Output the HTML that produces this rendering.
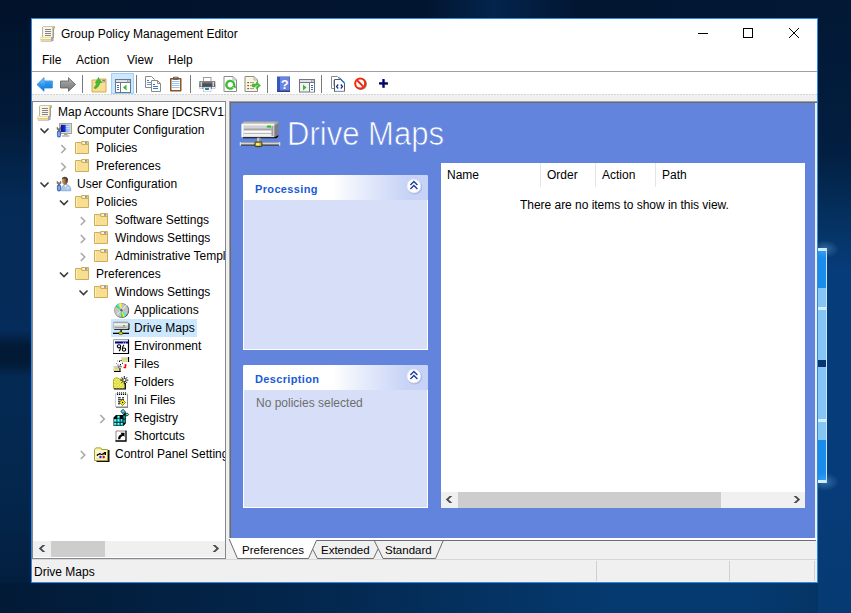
<!DOCTYPE html>
<html><head><meta charset="utf-8">
<style>
*{margin:0;padding:0;box-sizing:border-box}
html,body{width:851px;height:613px;overflow:hidden;background:#02132a;font-family:"Liberation Sans", sans-serif;font-size:12px;color:#000}
.a{position:absolute}
.t{position:absolute;white-space:nowrap}
svg{position:absolute;left:0;top:0}
</style></head><body>
<div class="a" style="left:0;top:0;width:851px;height:613px;background:#021a36"></div><div class="a" style="left:0;top:0;width:851px;height:19px;background:linear-gradient(90deg,#01122a 0%,#021530 50%,#03244c 58%,#021632 68%,#021834 100%)"></div><div class="a" style="left:0;top:0;width:31px;height:613px;background:linear-gradient(180deg,#01122a 0px,#021a38 120px,#042a56 200px,#052c5a 330px,#021a36 346px,#021a36 362px,#042a54 378px,#04264c 500px,#021c3a 613px)"></div><div class="a" style="left:0;top:583px;width:851px;height:30px;background:linear-gradient(90deg,#021a36 0%,#03264c 35%,#053a70 72%,#053a70 88%,#04325f 100%)"></div><div class="a" style="left:818px;top:0;width:33px;height:613px;background:linear-gradient(180deg,#021834 0px,#021e40 150px,#04305e 215px,#073c7a 270px,#073c7a 480px,#063a72 613px)"></div><div class="a" style="left:818px;top:248px;width:9px;height:3px;background:#e8f6ff;"></div><div class="a" style="left:818px;top:251px;width:9px;height:37px;background:#1a8cec;"></div><div class="a" style="left:818px;top:288px;width:9px;height:72px;background:#86c6f4;"></div><div class="a" style="left:818px;top:307px;width:9px;height:3px;background:#e8f6ff;opacity:.8"></div><div class="a" style="left:818px;top:360px;width:9px;height:7px;background:#083472;"></div><div class="a" style="left:818px;top:367px;width:9px;height:73px;background:#86c6f4;"></div><div class="a" style="left:818px;top:419px;width:9px;height:3px;background:#e8f6ff;opacity:.8"></div><div class="a" style="left:818px;top:440px;width:9px;height:41px;background:#1a8cec;"></div><div class="a" style="left:818px;top:480px;width:9px;height:3px;background:#e8f6ff;"></div><div class="a" style="left:826px;top:248px;width:1px;height:235px;background:#c8e8ff;"></div><div class="a" style="left:812px;top:236px;width:30px;height:26px;background:radial-gradient(ellipse 14px 9px at 13px 13px,rgba(140,210,255,.32),rgba(140,210,255,0))"></div><div class="a" style="left:812px;top:469px;width:30px;height:26px;background:radial-gradient(ellipse 14px 9px at 13px 13px,rgba(140,210,255,.32),rgba(140,210,255,0))"></div><div class="a" style="left:31px;top:18px;width:787px;height:565px;border:1px solid #2b8ae6;background:#fff"></div><div class="t" style="left:61px;top:25px;font-size:12px;color:#000;font-weight:400;line-height:18px;">Group Policy Management Editor</div><div class="t" style="left:42px;top:51px;font-size:12px;color:#000;font-weight:400;line-height:18px;">File</div><div class="t" style="left:76px;top:51px;font-size:12px;color:#000;font-weight:400;line-height:18px;">Action</div><div class="t" style="left:127px;top:51px;font-size:12px;color:#000;font-weight:400;line-height:18px;">View</div><div class="t" style="left:168px;top:51px;font-size:12px;color:#000;font-weight:400;line-height:18px;">Help</div><div class="a" style="left:32px;top:71px;width:785px;height:1px;background:#a0a0a0;"></div><div class="a" style="left:111px;top:73px;width:23px;height:21px;background:#cce8ff;border:1px solid #99d1ff"></div><svg width="851" height="613" viewBox="0 0 851 613" shape-rendering="crispEdges"><g transform="translate(39,25)" shape-rendering="geometricPrecision"><path d="M3 2L4 1H14V13H3Z" fill="#fdf5d4"/><rect x="3" y="2" width="1" height="11" fill="#b4b4b4"/><rect x="4" y="1" width="10" height="1" fill="#c4c4c4"/><rect x="13" y="2" width="1" height="11" fill="#cfc8a8"/><rect x="14" y="3" width="1" height="10" fill="#9a9a9a"/><rect x="6" y="4" width="6" height="1" fill="#7f84a2"/><rect x="6" y="6" width="6" height="1" fill="#7f84a2"/><rect x="6" y="8" width="6" height="1" fill="#7f84a2"/><rect x="6" y="10" width="6" height="1" fill="#7f84a2"/><path d="M14 1L16 1.5L16 3.5L14.5 4Z" fill="#cfa84a"/><rect x="1" y="12" width="12" height="4" rx="1.2" fill="#e8e0a8"/><rect x="2" y="13" width="10" height="1.2" fill="#fbf8e0"/><rect x="2" y="14.2" width="10" height="1" fill="#f0c070"/><rect x="12" y="12" width="2.5" height="4" fill="#a4a4b0"/><rect x="2" y="16" width="11" height="1" fill="#a0a0a0" opacity=".55"/></g></svg><div class="a" style="left:82px;top:75px;width:1px;height:18px;background:#7a7a7a;"></div><div class="a" style="left:136px;top:75px;width:1px;height:18px;background:#7a7a7a;"></div><div class="a" style="left:190px;top:75px;width:1px;height:18px;background:#7a7a7a;"></div><div class="a" style="left:267px;top:75px;width:1px;height:18px;background:#7a7a7a;"></div><div class="a" style="left:321px;top:75px;width:1px;height:18px;background:#7a7a7a;"></div><div class="a" style="left:32px;top:95px;width:785px;height:487px;background:#f0f0f0;"></div><div class="a" style="left:32px;top:94px;width:785px;height:1px;background:repeating-linear-gradient(90deg,#d4d4d4 0 2px,#f6f6f6 2px 3px)"></div><div class="a" style="left:32px;top:101px;width:194px;height:458px;border:1px solid #828790;background:#fff"></div><div class="a" style="left:111px;top:319px;width:86px;height:18px;background:#cce8ff;"></div><div class="a" style="left:33px;top:102px;width:192px;height:439px;overflow:hidden"><div class="t" style="left:25px;top:1px;line-height:18px">Map Accounts Share [DCSRV1.IT</div><div class="t" style="left:44px;top:19px;line-height:18px">Computer Configuration</div><div class="t" style="left:63px;top:37px;line-height:18px">Policies</div><div class="t" style="left:63px;top:55px;line-height:18px">Preferences</div><div class="t" style="left:44px;top:73px;line-height:18px">User Configuration</div><div class="t" style="left:63px;top:91px;line-height:18px">Policies</div><div class="t" style="left:82px;top:109px;line-height:18px">Software Settings</div><div class="t" style="left:82px;top:127px;line-height:18px">Windows Settings</div><div class="t" style="left:82px;top:145px;line-height:18px">Administrative Templates</div><div class="t" style="left:63px;top:163px;line-height:18px">Preferences</div><div class="t" style="left:82px;top:181px;line-height:18px">Windows Settings</div><div class="t" style="left:101px;top:199px;line-height:18px">Applications</div><div class="t" style="left:101px;top:217px;line-height:18px">Drive Maps</div><div class="t" style="left:101px;top:235px;line-height:18px">Environment</div><div class="t" style="left:101px;top:253px;line-height:18px">Files</div><div class="t" style="left:101px;top:271px;line-height:18px">Folders</div><div class="t" style="left:101px;top:289px;line-height:18px">Ini Files</div><div class="t" style="left:101px;top:307px;line-height:18px">Registry</div><div class="t" style="left:101px;top:325px;line-height:18px">Shortcuts</div><div class="t" style="left:82px;top:343px;line-height:18px">Control Panel Settings</div></div><svg width="851" height="613" viewBox="0 0 851 613" shape-rendering="crispEdges"><g transform="translate(36,77)" shape-rendering="geometricPrecision"><defs><linearGradient id="abl" x1="0" y1="0" x2="0" y2="1"><stop offset="0" stop-color="#8fd0ff"/><stop offset=".5" stop-color="#2c9cf0"/><stop offset="1" stop-color="#0a70d0"/></linearGradient></defs><path d="M1 7.5L8 0.7V4H16.3V11H8V14.3Z" fill="url(#abl)" stroke="#2a7fd0" stroke-width=".8" stroke-linejoin="round"/><rect x="9" y="5" width="6" height="4.5" fill="#1a88e8" opacity=".6"/></g><g transform="translate(60,77)" shape-rendering="geometricPrecision"><defs><linearGradient id="abr" x1="0" y1="0" x2="0" y2="1"><stop offset="0" stop-color="#b8b8b8"/><stop offset=".5" stop-color="#909090"/><stop offset="1" stop-color="#7a7a7a"/></linearGradient></defs><path d="M15.5 7.5L8.5 0.7V4H0.5V11H8.5V14.3Z" fill="url(#abr)" stroke="#5a5a5a" stroke-width=".8" stroke-linejoin="round"/></g><g transform="translate(91.5,76.5)" shape-rendering="geometricPrecision"><path d="M8.5 2.5H14.5V5.5H8.5Z" fill="#f6dd8e" stroke="#cfae5c"/><rect x="11" y="3.3" width="2.5" height="1.2" fill="#3f7fe0"/><path d="M0.5 3.5H7L8.5 5.5H14.5V15.5H0.5Z" fill="#f7de92" stroke="#cfac58"/><path d="M2.5 11.5C3.5 9.5 5 8.5 5.5 6.5L3.8 6.5L7 1L10 6.2L8.3 6.2C8 9 6 11 4 12.2Z" fill="#3cc030" stroke="#2a9a20" stroke-width=".5"/></g><g transform="translate(115,79)" shape-rendering="geometricPrecision"><rect x="0.5" y="0.5" width="15" height="13" fill="#fff" stroke="#6f7782"/><rect x="1" y="1" width="14" height="2" fill="#dde1e8"/><rect x="12" y="1.5" width="1" height="1" fill="#6f7782"/><rect x="13.6" y="1.5" width="1" height="1" fill="#6f7782"/><rect x="1" y="3" width="14" height="1" fill="#6f7782"/><rect x="5" y="4" width="1" height="9.5" fill="#6f7782"/><rect x="2" y="6" width="2" height="1" fill="#3a6ab8"/><rect x="2" y="8" width="2" height="1" fill="#3a6ab8"/><rect x="2" y="10" width="2" height="1" fill="#3a6ab8"/><path d="M8 8.5L11.5 5.5V11.5Z" fill="#34b830"/></g><g transform="translate(145,76)" shape-rendering="geometricPrecision"><path d="M0.5 0.5H6.5L9.5 3.5V11.5H0.5Z" fill="#fff" stroke="#8a8a8a"/><rect x="2" y="4" width="2" height="1" fill="#3a78c8"/><rect x="2" y="6" width="5" height="1" fill="#6a98d8"/><rect x="2" y="8" width="5" height="1" fill="#6a98d8"/><path d="M6.5 4.5H12.5L15.5 7.5V15.5H6.5Z" fill="#fff" stroke="#8a8a8a"/><path d="M12.5 4.5V7.5H15.5" fill="none" stroke="#8a8a8a"/><rect x="8" y="8" width="2" height="1" fill="#3a78c8"/><rect x="8" y="10" width="5" height="1" fill="#3a78c8"/><rect x="8" y="12" width="5" height="1" fill="#3a78c8"/></g><g transform="translate(169.5,76.5)" shape-rendering="geometricPrecision"><rect x="0.5" y="1.5" width="11.5" height="13.5" rx=".8" fill="#8a5424"/><rect x="2" y="3" width="8.5" height="10.5" fill="#fff"/><rect x="2.5" y="4.5" width="7.5" height="1" fill="#9ec4e4"/><rect x="2.5" y="6.5" width="7.5" height="1" fill="#9ec4e4"/><rect x="2.5" y="8.5" width="7.5" height="1" fill="#9ec4e4"/><rect x="2.5" y="10.5" width="7.5" height="1" fill="#9ec4e4"/><rect x="3.5" y="0.3" width="5.5" height="3" rx=".8" fill="#505050"/><rect x="4.5" y="0.8" width="3.5" height="1" fill="#a0a0a0"/></g><g transform="translate(199,77)" shape-rendering="geometricPrecision"><rect x="4.5" y="0.5" width="7.5" height="4" fill="#fff" stroke="#9a9a9a"/><defs><linearGradient id="prg" x1="0" y1="0" x2="0" y2="1"><stop offset="0" stop-color="#909090"/><stop offset=".5" stop-color="#4a4a4a"/><stop offset="1" stop-color="#6a6a6a"/></linearGradient></defs><rect x="0.3" y="4" width="16" height="7.5" fill="url(#prg)"/><rect x="1.5" y="5" width="1.6" height="4.5" fill="#c8d8e8"/><rect x="13.5" y="5" width="1.6" height="4.5" fill="#c8d8e8"/><rect x="0.3" y="10" width="16" height="1.5" fill="#f0f0f0"/><rect x="3.5" y="10.5" width="1" height="1" fill="#000"/><rect x="12" y="10.5" width="1" height="1" fill="#000"/><rect x="4.5" y="10.5" width="7.5" height="4.3" fill="#fff" stroke="#a8c0d8" stroke-width=".6"/><rect x="6" y="11" width="4" height="2" fill="#2a88e0"/><rect x="7.5" y="11.5" width="1" height="1.5" fill="#208020"/></g><g transform="translate(223.5,76)" shape-rendering="geometricPrecision"><path d="M0.5 0.5H9.5L13 4V15.5H0.5Z" fill="#fff" stroke="#8c8c8c"/><path d="M9.5 0.5V4H13" fill="none" stroke="#b0b0b0"/><path d="M9.4 11.6A3.9 3.9 0 1 1 10.6 9.4" fill="none" stroke="#3cbc30" stroke-width="2.3"/><path d="M8.2 10.6L12.6 12.6L11.6 8.2Z" fill="#3cbc30"/></g><g transform="translate(244.5,76)" shape-rendering="geometricPrecision"><path d="M0.5 0.5H9.5L13 4V15.5H0.5Z" fill="#fdf6dc" stroke="#8c8c8c"/><path d="M9.5 0.5V4H13" fill="none" stroke="#b0b0b0"/><rect x="3" y="6" width="1.2" height="1.2" fill="#222"/><rect x="5.5" y="6.1" width="4" height="1" fill="#9a9a9a"/><rect x="3" y="9" width="1.2" height="1.2" fill="#222"/><rect x="5.5" y="9.1" width="4" height="1" fill="#9a9a9a"/><rect x="3" y="12" width="1.2" height="1.2" fill="#222"/><rect x="5.5" y="12.1" width="4" height="1" fill="#9a9a9a"/><path d="M8 8H12V6L16 9.5L12 13V11H8Z" fill="#40c030" stroke="#30a020" stroke-width=".5"/><path d="M10.5 9.8L11.5 10.8L13.2 9" fill="none" stroke="#d0ffd0" stroke-width=".8"/></g><g transform="translate(276.5,76)" shape-rendering="geometricPrecision"><rect x="0.5" y="0.5" width="13" height="15" fill="#3456c8"/><rect x="3.5" y="1" width="9.5" height="13.5" fill="#6a84e0"/><rect x="0.5" y="14.8" width="13" height="1" fill="#1a2a60"/><text x="4.3" y="12.8" font-family="Liberation Sans" font-size="13" font-weight="700" fill="#fff">?</text></g><g transform="translate(299,79)" shape-rendering="geometricPrecision"><rect x="0.5" y="0.5" width="15" height="12.5" fill="#f2f2f2" stroke="#6f7782"/><rect x="1" y="1" width="14" height="2" fill="#dde1e8"/><rect x="12" y="1.5" width="1" height="1" fill="#6f7782"/><rect x="13.6" y="1.5" width="1" height="1" fill="#6f7782"/><rect x="1" y="3" width="14" height="1" fill="#6f7782"/><rect x="10" y="4" width="1" height="9" fill="#6f7782"/><rect x="11" y="4" width="4" height="8.5" fill="#fff"/><rect x="12" y="6" width="2" height="1" fill="#3a6ab8"/><rect x="12" y="8" width="2" height="1" fill="#3a6ab8"/><rect x="12" y="10" width="2" height="1" fill="#3a6ab8"/><path d="M4 5.5L7.5 8.5L4 11.5Z" fill="#34b830"/></g><g transform="translate(331,76)" shape-rendering="geometricPrecision"><path d="M0.5 0.5H6.5L8 2V12.5H0.5Z" fill="#fff" stroke="#8c8c8c"/><rect x="2" y="4" width="1" height="6" fill="#b0c8e8"/><path d="M3.5 3.5H9.5L13.5 7.5V15.5H3.5Z" fill="#fff" stroke="#5a5a5a"/><path d="M8 0.5L14 6.5V8.5L9 3.5Z" fill="#1a7ad8"/><path d="M7.2 8.5L5.5 10.5L7.2 12.5M9.8 8.5L11.5 10.5L9.8 12.5" fill="none" stroke="#1a2a9a" stroke-width="1.2"/><rect x="4" y="14.5" width="9.5" height="1" fill="#b8d8f0"/></g><g transform="translate(354,77)" shape-rendering="geometricPrecision"><circle cx="6.9" cy="7" r="5.3" fill="none" stroke="#6a4a3a" stroke-width="1.6" opacity=".7"/><circle cx="6.2" cy="6.4" r="5" fill="#fff" stroke="#f02a10" stroke-width="2"/><path d="M3 3.2L9.4 9.6" stroke="#f02a10" stroke-width="2"/></g><g transform="translate(378.7,79)" shape-rendering="geometricPrecision"><path d="M4 0.5H6V3.5H9V5.5H6V8.5H4V5.5H1V3.5H4Z" fill="#c8c0a0" transform="translate(.5,.5)"/><path d="M3.6 0H5.9V3.3H9.2V5.5H5.9V8.7H3.6V5.5H0.3V3.3H3.6Z" fill="#00007a"/></g><path d="M698 33.5H708" stroke="#000" stroke-width="1"/><rect x="743.5" y="28.5" width="9" height="9" fill="none" stroke="#000"/><path d="M789 28L799 38M799 28L789 38" stroke="#000" stroke-width="1" shape-rendering="geometricPrecision"/></svg><div class="a" style="left:33px;top:541px;width:192px;height:16px;background:#f0f0f0;"></div><div class="a" style="left:51px;top:541px;width:54px;height:16px;background:#cdcdcd;"></div><div class="a" style="left:229px;top:101px;width:588px;height:437px;border-top:1px solid #a0a0a0;border-left:1px solid #a0a0a0;background:#6384dd"></div><div class="a" style="left:230px;top:102px;width:587px;height:436px;border-top:1px solid #696969;border-left:1px solid #696969;background:#6384dd"></div><div class="a" style="left:815px;top:103px;width:2px;height:435px;background:#f0f0f0;"></div><div class="t" style="left:287px;top:112px;font-size:33.4px;color:#fff;font-weight:400;line-height:44px;transform:scaleX(0.93);transform-origin:0 0;-webkit-text-stroke:.7px #6384dd">Drive Maps</div><div class="a" style="left:243px;top:175px;width:185px;height:175px;background:#fff;border-radius:2px 2px 0 0"></div><div class="a" style="left:243px;top:175px;width:185px;height:25px;background:linear-gradient(90deg,#fff 0%,#fff 48%,#e6ecfb 65%,#c8d4f6 88%,#c6d3f7 100%);border-radius:2px 2px 0 0"></div><div class="a" style="left:244px;top:200px;width:183px;height:149px;background:#d6dff7;"></div><div class="t" style="left:255px;top:182px;font-size:11px;color:#1a5ad6;font-weight:700;line-height:14px;letter-spacing:.35px">Processing</div><div class="a" style="left:243px;top:365px;width:185px;height:143px;background:#fff;border-radius:2px 2px 0 0"></div><div class="a" style="left:243px;top:365px;width:185px;height:25px;background:linear-gradient(90deg,#fff 0%,#fff 48%,#e6ecfb 65%,#c8d4f6 88%,#c6d3f7 100%);border-radius:2px 2px 0 0"></div><div class="a" style="left:244px;top:390px;width:183px;height:117px;background:#d6dff7;"></div><div class="t" style="left:255px;top:372px;font-size:11px;color:#1a5ad6;font-weight:700;line-height:14px;letter-spacing:.35px">Description</div><div class="t" style="left:256px;top:394px;font-size:12px;color:#6e6e6e;font-weight:400;line-height:18px;">No policies selected</div><div class="a" style="left:441px;top:163px;width:364px;height:345px;background:#fff;"></div><div class="a" style="left:540px;top:163px;width:1px;height:24px;background:#e5e5e5;"></div><div class="a" style="left:595px;top:163px;width:1px;height:24px;background:#e5e5e5;"></div><div class="a" style="left:655px;top:163px;width:1px;height:24px;background:#e5e5e5;"></div><div class="t" style="left:447px;top:166px;font-size:12px;color:#000;font-weight:400;line-height:18px;">Name</div><div class="t" style="left:547px;top:166px;font-size:12px;color:#000;font-weight:400;line-height:18px;">Order</div><div class="t" style="left:602px;top:166px;font-size:12px;color:#000;font-weight:400;line-height:18px;">Action</div><div class="t" style="left:662px;top:166px;font-size:12px;color:#000;font-weight:400;line-height:18px;">Path</div><div class="t" style="left:520px;top:196px;font-size:12px;color:#000;font-weight:400;line-height:18px;letter-spacing:-.03px">There are no items to show in this view.</div><div class="a" style="left:441px;top:492px;width:364px;height:16px;background:#f0f0f0;"></div><div class="a" style="left:458px;top:492px;width:263px;height:16px;background:#cdcdcd;"></div><div class="a" style="left:231px;top:538px;width:586px;height:2px;background:#fff;"></div><div class="a" style="left:316px;top:540px;width:500px;height:1px;background:#6e6e6e;"></div><svg width="851" height="613" viewBox="0 0 851 613" shape-rendering="crispEdges"><g transform="translate(36,104)" shape-rendering="geometricPrecision"><path d="M3 2L4 1H14V13H3Z" fill="#fdf5d4"/><rect x="3" y="2" width="1" height="11" fill="#b4b4b4"/><rect x="4" y="1" width="10" height="1" fill="#c4c4c4"/><rect x="13" y="2" width="1" height="11" fill="#cfc8a8"/><rect x="14" y="3" width="1" height="10" fill="#9a9a9a"/><rect x="6" y="4" width="6" height="1" fill="#7f84a2"/><rect x="6" y="6" width="6" height="1" fill="#7f84a2"/><rect x="6" y="8" width="6" height="1" fill="#7f84a2"/><rect x="6" y="10" width="6" height="1" fill="#7f84a2"/><path d="M14 1L16 1.5L16 3.5L14.5 4Z" fill="#cfa84a"/><rect x="1" y="12" width="12" height="4" rx="1.2" fill="#e8e0a8"/><rect x="2" y="13" width="10" height="1.2" fill="#fbf8e0"/><rect x="2" y="14.2" width="10" height="1" fill="#f0c070"/><rect x="12" y="12" width="2.5" height="4" fill="#a4a4b0"/><rect x="2" y="16" width="11" height="1" fill="#a0a0a0" opacity=".55"/></g><g transform="translate(56,122)" shape-rendering="geometricPrecision"><rect x="3.5" y="1.5" width="12" height="10" fill="#dcd8cc" stroke="#a8a49a"/><defs><linearGradient id="scr" x1="0" x2="1"><stop offset="0" stop-color="#00109a"/><stop offset=".45" stop-color="#2030d0"/><stop offset=".55" stop-color="#7aa8f0"/><stop offset="1" stop-color="#b8d4f8"/></linearGradient></defs><rect x="4.8" y="2.8" width="9.5" height="7.2" fill="url(#scr)"/><rect x="10" y="4" width="3.5" height="1" fill="#e0ecff" opacity=".8"/><rect x="10" y="6" width="3.5" height="1" fill="#e0ecff" opacity=".6"/><rect x="8" y="12" width="3.5" height="1.2" fill="#a0a0a0"/><rect x="6" y="13.2" width="7.5" height="1.6" fill="#b8b8b8"/><path d="M1.2 5.3V7.4L2.2 8.4H3.8L4.8 7.4V5.3L3.8 6.3V7.199999999999999H2.2V6.3Z" fill="#8c8c8c" stroke="#4a4a4a" stroke-width=".6"/><rect x="1.4" y="8.8" width="3.2" height="6.3" rx="1.4" fill="#3a68c0" stroke="#24489a" stroke-width=".6"/><rect x="2.5" y="9.8" width="1" height="4.3" fill="#c0e0ff"/></g><g transform="translate(72,138)" shape-rendering="geometricPrecision"><path d="M9.5 3.5H16.5V7H9.5Z" fill="#f6dd8e" stroke="#cfae5c"/><rect x="11" y="4.3" width="2" height="1.2" fill="#ffffff"/><rect x="13" y="4.3" width="2.2" height="1.2" fill="#3f7fe0"/><path d="M3.5 4.5H8.5L10 6.5H16.5V15.5H3.5Z" fill="#f7de92" stroke="#cfac58"/><rect x="4" y="5" width="1" height="10" fill="#fdeebb"/></g><g transform="translate(72,156)" shape-rendering="geometricPrecision"><path d="M9.5 3.5H16.5V7H9.5Z" fill="#f6dd8e" stroke="#cfae5c"/><rect x="11" y="4.3" width="2" height="1.2" fill="#ffffff"/><rect x="13" y="4.3" width="2.2" height="1.2" fill="#3f7fe0"/><path d="M3.5 4.5H8.5L10 6.5H16.5V15.5H3.5Z" fill="#f7de92" stroke="#cfac58"/><rect x="4" y="5" width="1" height="10" fill="#fdeebb"/></g><g transform="translate(56,176)" shape-rendering="geometricPrecision"><path d="M5.5 14.8C5.5 10.5 7 8.5 9.5 8.5C12.5 8.5 14.8 10.5 14.8 14.8Z" fill="#a6c8ee" stroke="#6a90c0" stroke-width=".6"/><path d="M8.5 8.8L9.6 11.5L10.6 8.8Z" fill="#ffffff"/><circle cx="12" cy="12" r="1.3" fill="#c8dcf4"/><defs><linearGradient id="face" x1="0" x2="1"><stop offset="0" stop-color="#d8a870"/><stop offset=".6" stop-color="#9a6434"/><stop offset="1" stop-color="#5a3818"/></linearGradient></defs><path d="M6 3.5C6 1.8 7.2 1 8.8 1C10.4 1 11.5 2 11.5 3.8V6.5L10 8.8H8L6 6.8Z" fill="url(#face)"/><path d="M5.8 3.8C5.8 1.6 7.2 0.8 8.8 0.8C10.5 0.8 11.6 1.8 11.6 4L10.6 3L7 2.6Z" fill="#454545"/><rect x="10.5" y="2.5" width="1.2" height="3" fill="#303030"/><path d="M1.2 5.3V7.4L2.2 8.4H3.8L4.8 7.4V5.3L3.8 6.3V7.199999999999999H2.2V6.3Z" fill="#8c8c8c" stroke="#4a4a4a" stroke-width=".6"/><rect x="1.4" y="8.8" width="3.2" height="6.3" rx="1.4" fill="#3a68c0" stroke="#24489a" stroke-width=".6"/><rect x="2.5" y="9.8" width="1" height="4.3" fill="#c0e0ff"/></g><g transform="translate(72,192)" shape-rendering="geometricPrecision"><path d="M9.5 3.5H16.5V7H9.5Z" fill="#f6dd8e" stroke="#cfae5c"/><rect x="11" y="4.3" width="2" height="1.2" fill="#ffffff"/><rect x="13" y="4.3" width="2.2" height="1.2" fill="#3f7fe0"/><path d="M3.5 4.5H8.5L10 6.5H16.5V15.5H3.5Z" fill="#f7de92" stroke="#cfac58"/><rect x="4" y="5" width="1" height="10" fill="#fdeebb"/></g><g transform="translate(91,210)" shape-rendering="geometricPrecision"><path d="M9.5 3.5H16.5V7H9.5Z" fill="#f6dd8e" stroke="#cfae5c"/><rect x="11" y="4.3" width="2" height="1.2" fill="#ffffff"/><rect x="13" y="4.3" width="2.2" height="1.2" fill="#3f7fe0"/><path d="M3.5 4.5H8.5L10 6.5H16.5V15.5H3.5Z" fill="#f7de92" stroke="#cfac58"/><rect x="4" y="5" width="1" height="10" fill="#fdeebb"/></g><g transform="translate(91,228)" shape-rendering="geometricPrecision"><path d="M9.5 3.5H16.5V7H9.5Z" fill="#f6dd8e" stroke="#cfae5c"/><rect x="11" y="4.3" width="2" height="1.2" fill="#ffffff"/><rect x="13" y="4.3" width="2.2" height="1.2" fill="#3f7fe0"/><path d="M3.5 4.5H8.5L10 6.5H16.5V15.5H3.5Z" fill="#f7de92" stroke="#cfac58"/><rect x="4" y="5" width="1" height="10" fill="#fdeebb"/></g><g transform="translate(91,246)" shape-rendering="geometricPrecision"><path d="M9.5 3.5H16.5V7H9.5Z" fill="#f6dd8e" stroke="#cfae5c"/><rect x="11" y="4.3" width="2" height="1.2" fill="#ffffff"/><rect x="13" y="4.3" width="2.2" height="1.2" fill="#3f7fe0"/><path d="M3.5 4.5H8.5L10 6.5H16.5V15.5H3.5Z" fill="#f7de92" stroke="#cfac58"/><rect x="4" y="5" width="1" height="10" fill="#fdeebb"/></g><g transform="translate(72,264)" shape-rendering="geometricPrecision"><path d="M9.5 3.5H16.5V7H9.5Z" fill="#f6dd8e" stroke="#cfae5c"/><rect x="11" y="4.3" width="2" height="1.2" fill="#ffffff"/><rect x="13" y="4.3" width="2.2" height="1.2" fill="#3f7fe0"/><path d="M3.5 4.5H8.5L10 6.5H16.5V15.5H3.5Z" fill="#f7de92" stroke="#cfac58"/><rect x="4" y="5" width="1" height="10" fill="#fdeebb"/></g><g transform="translate(91,282)" shape-rendering="geometricPrecision"><path d="M9.5 3.5H16.5V7H9.5Z" fill="#f6dd8e" stroke="#cfae5c"/><rect x="11" y="4.3" width="2" height="1.2" fill="#ffffff"/><rect x="13" y="4.3" width="2.2" height="1.2" fill="#3f7fe0"/><path d="M3.5 4.5H8.5L10 6.5H16.5V15.5H3.5Z" fill="#f7de92" stroke="#cfac58"/><rect x="4" y="5" width="1" height="10" fill="#fdeebb"/></g><g transform="translate(113,301)" shape-rendering="geometricPrecision"><circle cx="8.9" cy="9.6" r="7.2" fill="#101010"/><circle cx="8.4" cy="9.3" r="7" fill="#c4c4c4" stroke="#9a9a9a" stroke-width=".7"/><path d="M8.4 9.3L5.8 2.6L8.2 2.3Z" fill="#ffff00"/><path d="M8.4 9.3L3.4 4.6L4.8 3.4Z" fill="#00ffff"/><path d="M8.4 9.3L2.8 5.6L3.4 4.6Z" fill="#00e000"/><path d="M8.4 9.3L13.6 13.9L12.4 15Z" fill="#00ffff"/><path d="M8.4 9.3L11.4 15.6L9.8 16Z" fill="#ffff00"/><path d="M8.4 9.3L9.8 16L8.6 16.4Z" fill="#00e000"/><path d="M8.4 9.3L13.2 4.4M8.4 9.3L3.8 13.6" stroke="#f4f4f4" stroke-width="1"/><circle cx="8.4" cy="9.3" r="1.2" fill="#606060"/></g><g transform="translate(113,319)" shape-rendering="geometricPrecision"><rect x="1" y="4" width="15.5" height="7" rx="1.2" fill="#101010"/><defs><linearGradient id="dsg" x1="0" y1="0" x2="0" y2="1"><stop offset="0" stop-color="#9a9a9a"/><stop offset=".3" stop-color="#ffffff"/><stop offset=".6" stop-color="#c8c8c8"/><stop offset="1" stop-color="#f0f0f0"/></linearGradient></defs><rect x="0.3" y="3" width="15" height="7" rx="1.2" fill="url(#dsg)" stroke="#8a8a8a" stroke-width=".5"/><rect x="1.5" y="8" width="12" height="0.8" fill="#909090"/><rect x="10" y="6.2" width="2" height="1.2" fill="#10d010"/><rect x="7.3" y="10.5" width="1.6" height="3" fill="#202020"/><rect x="0" y="13.7" width="16" height="1.3" fill="#000"/><rect x="6" y="13" width="3.5" height="2.6" rx=".6" fill="#e0d000" stroke="#303000" stroke-width=".5"/></g><g transform="translate(113,337)" shape-rendering="geometricPrecision"><rect x="0.5" y="2.5" width="15" height="13.5" fill="#fff"/><path d="M0.5 16V2.5H15.5" fill="none" stroke="#a8a8a8"/><path d="M15.5 2.5V16.5H0" fill="none" stroke="#000" stroke-width="1.2"/><rect x="1.5" y="3.5" width="13.5" height="1" fill="#d8d8d8"/><rect x="2" y="4.5" width="13" height="2" fill="#000080"/><rect x="10" y="5.5" width="1" height="1" fill="#fff"/><rect x="12" y="5.5" width="1" height="1" fill="#fff"/><ellipse cx="6" cy="9.3" rx="1.7" ry="1.6" fill="none" stroke="#000" stroke-width="1.1"/><ellipse cx="11" cy="12.6" rx="1.7" ry="1.6" fill="none" stroke="#000" stroke-width="1.1"/><path d="M7.6 9.8C7.6 12 6.8 13.5 6 14.2M9.4 12.1C9.4 10 10.2 8.5 11 7.8" fill="none" stroke="#000" stroke-width="1.1"/></g><g transform="translate(113,355)" shape-rendering="geometricPrecision"><rect x="8.3" y="2.3" width="7" height="4.5" fill="#c8c8d0"/><rect x="8.8" y="4.6" width="1.1" height="1.4" fill="#ffff00"/><rect x="10.6" y="4.6" width="1.1" height="1.4" fill="#ffff00"/><rect x="12.4" y="4.6" width="1.1" height="1.4" fill="#ffff00"/><rect x="14.2" y="4.6" width="1.1" height="1.4" fill="#ffff00"/><rect x="9.6" y="2.6" width="1.1" height="1.2" fill="#ffff00"/><rect x="11.4" y="2.6" width="1.1" height="1.2" fill="#ffff00"/><rect x="15" y="2" width="1.1" height="5" fill="#000"/><rect x="0.5" y="11" width="6.5" height="5" fill="#c8c8d0"/><rect x="1.2" y="14" width="1.1" height="1.5" fill="#ffff00"/><rect x="3" y="14" width="1.1" height="1.5" fill="#ffff00"/><rect x="4.8" y="14" width="1.1" height="1.5" fill="#ffff00"/><rect x="1" y="12.2" width="1.2" height="1.6" fill="#ffff00"/><rect x="1" y="16" width="6.5" height="1" fill="#000"/><rect x="6.5" y="13" width="1" height="4" fill="#000"/><rect x="6" y="6" width="1" height="1" fill="#000"/><rect x="7.5" y="5" width="1" height="1" fill="#000"/><rect x="4.5" y="9.5" width="1" height="1" fill="#000"/><rect x="7" y="9" width="1" height="1" fill="#000"/><rect x="9" y="7.8" width="1" height="1" fill="#000"/><rect x="5.2" y="11.5" width="1" height="1" fill="#000"/><rect x="7.5" y="11.3" width="1" height="1" fill="#000"/><rect x="6.5" y="10.5" width="1" height="1" fill="#000"/><rect x="3" y="8" width="1" height="1" fill="#909090"/><rect x="4" y="5.5" width="1" height="1" fill="#909090"/><rect x="6" y="5" width="1" height="1" fill="#909090"/><path d="M10.5 12.5H12.5V10.5M11.5 10H13.5" fill="none" stroke="#ff0000" stroke-width="1.3"/></g><g transform="translate(113,373)" shape-rendering="geometricPrecision"><path d="M0.5 15.5V6.5L2 5H5L6 6H9L11.8 9V15.5Z" fill="#f4f040" stroke="#a09a20" stroke-width=".8"/><path d="M1 16H12.3V10" fill="none" stroke="#000" stroke-width="1.2"/><rect x="1.5" y="7" width=".9" height=".9" fill="#a8a8c0"/><rect x="4.5" y="7" width=".9" height=".9" fill="#a8a8c0"/><rect x="7.5" y="7" width=".9" height=".9" fill="#a8a8c0"/><rect x="3" y="8.5" width=".9" height=".9" fill="#a8a8c0"/><rect x="6" y="8.5" width=".9" height=".9" fill="#a8a8c0"/><rect x="1.5" y="10" width=".9" height=".9" fill="#a8a8c0"/><rect x="4.5" y="10" width=".9" height=".9" fill="#a8a8c0"/><rect x="7.5" y="10" width=".9" height=".9" fill="#a8a8c0"/><rect x="10.5" y="10" width=".9" height=".9" fill="#a8a8c0"/><rect x="3" y="11.5" width=".9" height=".9" fill="#a8a8c0"/><rect x="6" y="11.5" width=".9" height=".9" fill="#a8a8c0"/><rect x="9" y="11.5" width=".9" height=".9" fill="#a8a8c0"/><rect x="1.5" y="13" width=".9" height=".9" fill="#a8a8c0"/><rect x="4.5" y="13" width=".9" height=".9" fill="#a8a8c0"/><rect x="7.5" y="13" width=".9" height=".9" fill="#a8a8c0"/><rect x="10.5" y="13" width=".9" height=".9" fill="#a8a8c0"/><rect x="3" y="14.5" width=".9" height=".9" fill="#a8a8c0"/><rect x="6" y="14.5" width=".9" height=".9" fill="#a8a8c0"/><rect x="9" y="14.5" width=".9" height=".9" fill="#a8a8c0"/><path d="M11.3 3V11.2M7.3 7.1H15.3M8.5 4.3L14.1 9.9M14.1 4.3L8.5 9.9" stroke="#000" stroke-width=".9"/><circle cx="11.3" cy="7.1" r="1.1" fill="#fff"/></g><g transform="translate(113,391)" shape-rendering="geometricPrecision"><rect x="3" y="3.5" width="12" height="13" fill="#111"/><rect x="2.3" y="2.8" width="12" height="13" fill="#fff" stroke="#b0b0b0" stroke-width=".6"/><rect x="3" y="3" width="11" height="1.2" fill="#e8e8e8"/><circle cx="4.5" cy="1.8" r=".6" fill="#000"/><circle cx="4.5" cy="3.4" r=".6" fill="#000"/><circle cx="6.5" cy="1.8" r=".6" fill="#000"/><circle cx="6.5" cy="3.4" r=".6" fill="#000"/><circle cx="8.5" cy="1.8" r=".6" fill="#000"/><circle cx="8.5" cy="3.4" r=".6" fill="#000"/><circle cx="10.5" cy="1.8" r=".6" fill="#000"/><circle cx="10.5" cy="3.4" r=".6" fill="#000"/><circle cx="12.5" cy="1.8" r=".6" fill="#000"/><circle cx="12.5" cy="3.4" r=".6" fill="#000"/><rect x="5" y="6.3" width="2.8" height="1" fill="#000"/><rect x="9" y="6.3" width="2" height="1" fill="#000"/><rect x="5" y="8.3" width="6" height="1" fill="#000"/><rect x="5" y="10.3" width="2" height="1" fill="#000"/><rect x="5" y="12.3" width="2" height="1" fill="#000"/><path d="M9.6 8.5L12.6 11.5L9.6 14.5L6.6 11.5Z" fill="#ffff00" stroke="#000" stroke-width=".5"/><circle cx="9.6" cy="11.5" r=".8" fill="#000"/></g><g transform="translate(113,409)" shape-rendering="geometricPrecision"><path d="M0.5 17V8.5L3 6H9.5L12.8 2.8V14.5L10.3 17Z" fill="#000"/><rect x="4.2" y="6.6" width="2.7" height="3" fill="#10c0c0"/><rect x="4.8" y="7.199999999999999" width="1.2" height="1.2" fill="#e0ffff"/><rect x="1" y="10" width="2.7" height="3" fill="#10c0c0"/><rect x="1.6" y="10.6" width="1.2" height="1.2" fill="#e0ffff"/><rect x="4.2" y="10" width="2.7" height="3" fill="#10c0c0"/><rect x="4.8" y="10.6" width="1.2" height="1.2" fill="#e0ffff"/><rect x="1" y="13.6" width="2.7" height="3" fill="#10c0c0"/><rect x="1.6" y="14.2" width="1.2" height="1.2" fill="#e0ffff"/><rect x="4.2" y="13.6" width="2.7" height="3" fill="#10c0c0"/><rect x="4.8" y="14.2" width="1.2" height="1.2" fill="#e0ffff"/><rect x="7.4" y="13.6" width="2.7" height="3" fill="#10c0c0"/><rect x="8.0" y="14.2" width="1.2" height="1.2" fill="#e0ffff"/><rect x="7.4" y="10" width="2.2" height="3" fill="#10b0b0"/><rect x="7.9" y="10.5" width="1" height="1" fill="#c0ffff"/><rect x="10.3" y="6.5" width="1.8" height="3" fill="#0aa8a8"/><rect x="10.3" y="10.5" width="1.8" height="3.2" fill="#0aa8a8"/><path d="M7.8 2.5L10 0.3L12.2 2.5L10 4.7Z" fill="#10c8c8" stroke="#000" stroke-width=".7"/><rect x="9.5" y="1.5" width="1" height="1" fill="#fff"/><path d="M12.3 5.5L14 3.8L15.7 5.5L14 7.2Z" fill="#10c8c8" stroke="#000" stroke-width=".7"/><rect x="13.5" y="4.8" width="1" height="1" fill="#fff"/></g><g transform="translate(112.5,426.5)" shape-rendering="geometricPrecision"><rect x="3.5" y="4.5" width="10" height="10" fill="#fff"/><path d="M3.5 15V4.5H14" fill="none" stroke="#8a8a8a" stroke-width="1"/><path d="M13.5 4.3V14.5H3" fill="none" stroke="#000" stroke-width="1.3"/><path d="M5.6 12.8C5.4 9.8 7.2 8.2 9.2 7.8L8 6.2H12V10.2L10.7 9.2C9 9.6 7.8 10.8 7.8 12.8Z" fill="#000"/></g><g transform="translate(93,445)" shape-rendering="geometricPrecision"><path d="M2.5 16V4L3.5 3H8L9 4H15.5V16Z" fill="#101010" transform="translate(1,1)"/><path d="M1.5 15.5V4.5L2.8 2.9H7.8L8.8 4.5H14.5V15.5Z" fill="#f8f2a8" stroke="#a8a040" stroke-width="1"/><rect x="2.5" y="5.3" width="11.5" height="9.5" fill="#fcf7c0"/><path d="M3.8 10.5L6.5 8.5L9.5 9.5L12 7.5" stroke="#000" stroke-width="1.5"/><path d="M4.5 8.5L7 7.5L9.5 8.8" stroke="#fff" stroke-width="1"/><rect x="11.5" y="7" width="1.5" height="3" fill="#000"/><circle cx="7.4" cy="12" r="1.2" fill="#2020ff"/><circle cx="10.7" cy="12" r="1.2" fill="#e00000"/><rect x="3" y="13.5" width="11" height=".6" fill="#f0b0a0" opacity=".7"/></g><path d="M40.5 128.5l4 4l4-4" fill="none" stroke="#3a3a3a" stroke-width="1.6" shape-rendering="geometricPrecision"/><path d="M61.3 145l4 4l-4 4" fill="none" stroke="#a6a6a6" stroke-width="1.5" shape-rendering="geometricPrecision"/><path d="M61.3 163l4 4l-4 4" fill="none" stroke="#a6a6a6" stroke-width="1.5" shape-rendering="geometricPrecision"/><path d="M40.5 182.5l4 4l4-4" fill="none" stroke="#3a3a3a" stroke-width="1.6" shape-rendering="geometricPrecision"/><path d="M60.0 200.5l4 4l4-4" fill="none" stroke="#3a3a3a" stroke-width="1.6" shape-rendering="geometricPrecision"/><path d="M80.8 217l4 4l-4 4" fill="none" stroke="#a6a6a6" stroke-width="1.5" shape-rendering="geometricPrecision"/><path d="M80.8 235l4 4l-4 4" fill="none" stroke="#a6a6a6" stroke-width="1.5" shape-rendering="geometricPrecision"/><path d="M80.8 253l4 4l-4 4" fill="none" stroke="#a6a6a6" stroke-width="1.5" shape-rendering="geometricPrecision"/><path d="M60.0 272.5l4 4l4-4" fill="none" stroke="#3a3a3a" stroke-width="1.6" shape-rendering="geometricPrecision"/><path d="M79.5 290.5l4 4l4-4" fill="none" stroke="#3a3a3a" stroke-width="1.6" shape-rendering="geometricPrecision"/><path d="M100.3 415l4 4l-4 4" fill="none" stroke="#a6a6a6" stroke-width="1.5" shape-rendering="geometricPrecision"/><path d="M80.8 451l4 4l-4 4" fill="none" stroke="#a6a6a6" stroke-width="1.5" shape-rendering="geometricPrecision"/><polygon points="38.8,548.4 42.599999999999994,544.9 45.3,544.9 41.5,548.4 45.3,551.9 42.599999999999994,551.9" fill="#4a4a4a" shape-rendering="geometricPrecision"/><polygon points="219.1,548.4 215.29999999999998,544.9 212.6,544.9 216.4,548.4 212.6,551.9 215.29999999999998,551.9" fill="#4a4a4a" shape-rendering="geometricPrecision"/><g transform="translate(238,120)" shape-rendering="geometricPrecision"><defs><linearGradient id="dbt" x1="0" y1="0" x2="0" y2="1"><stop offset="0" stop-color="#9a9a9a"/><stop offset="1" stop-color="#d4d4d4"/></linearGradient><linearGradient id="dbb" x1="0" y1="0" x2="0" y2="1"><stop offset="0" stop-color="#8a8a8a"/><stop offset=".35" stop-color="#e0e0e0"/><stop offset=".7" stop-color="#7a7a7a"/><stop offset="1" stop-color="#2a2a2a"/></linearGradient></defs><path d="M4.5 16H39L40.3 14.5V16.5L38.5 18.2H5Z" fill="#000"/><path d="M3.6 4L6.2 1.2H40.3L36.5 4Z" fill="url(#dbt)"/><path d="M36.3 4L40.3 1.2V15L37 17.2H36.3Z" fill="#7e7e7e"/><path d="M36.3 4L40.3 1.2V3L36.3 6Z" fill="#a8a8a8"/><rect x="3.6" y="4" width="32.7" height="13.2" fill="#dedede"/><rect x="3.6" y="4" width="1.6" height="13.2" fill="#ffffff"/><rect x="5.2" y="4" width="31" height="1.3" fill="#f4f4f4"/><rect x="6" y="6.3" width="27.5" height="2.3" fill="#c2c2c2"/><rect x="6" y="6.8" width="22" height=".7" fill="#e8e8e8"/><rect x="6" y="8.6" width="27.5" height="1.6" fill="#a6a6a6"/><rect x="6" y="11" width="27.5" height="1.9" fill="#ffffff"/><rect x="6" y="12.9" width="27.5" height=".8" fill="#8e8e8e"/><rect x="6" y="13.7" width="27.5" height="2.3" fill="#f2f2f2"/><rect x="33.5" y="6" width="1.8" height="10" fill="#a0a0a0"/><rect x="29" y="5.6" width="4" height="2" rx=".9" fill="#12c812"/><rect x="19.4" y="17.8" width="3.3" height="4.5" fill="#9a9a9a"/><rect x="19.4" y="17.8" width="1.2" height="4.5" fill="#e0e0e0"/><rect x="2.8" y="22.1" width="38.4" height="3.6" fill="url(#dbb)"/><rect x="1.8" y="22.1" width="1" height="3.6" fill="#f4f4f4"/><rect x="41.2" y="22.1" width="1" height="3.6" fill="#f4f4f4"/><rect x="17" y="22" width="6.9" height="4.6" rx=".6" fill="#c8b828" stroke="#2a2a10" stroke-width=".9"/><rect x="18.3" y="23.2" width="3" height="2" fill="#fff8a0"/></g><circle cx="414.7" cy="186.8" r="7.6" fill="#a8b4dc" opacity=".8" shape-rendering="geometricPrecision"/><circle cx="413.9" cy="186" r="7" fill="#fff" stroke="#d0d8ee" stroke-width=".6" shape-rendering="geometricPrecision"/><path d="M410.4 185l3.5-3.5l3.5 3.5M410.4 189l3.5-3.5l3.5 3.5" fill="none" stroke="#1c3da0" stroke-width="1.4" shape-rendering="geometricPrecision"/><circle cx="414.7" cy="376.8" r="7.6" fill="#a8b4dc" opacity=".8" shape-rendering="geometricPrecision"/><circle cx="413.9" cy="376" r="7" fill="#fff" stroke="#d0d8ee" stroke-width=".6" shape-rendering="geometricPrecision"/><path d="M410.4 375l3.5-3.5l3.5 3.5M410.4 379l3.5-3.5l3.5 3.5" fill="none" stroke="#1c3da0" stroke-width="1.4" shape-rendering="geometricPrecision"/><polygon points="445.8,499.4 449.6,495.9 452.3,495.9 448.5,499.4 452.3,502.9 449.6,502.9" fill="#4a4a4a" shape-rendering="geometricPrecision"/><polygon points="800.1,499.4 796.3000000000001,495.9 793.6,495.9 797.4,499.4 793.6,502.9 796.3000000000001,502.9" fill="#4a4a4a" shape-rendering="geometricPrecision"/><path d="M312.5 549L317.5 558.5H373.5L378 549M374 540L383 558.5H435.5L443.5 540" fill="none" stroke="#6e6e6e" stroke-width="1" shape-rendering="geometricPrecision"/><polygon points="229,538 316.5,538 316.5,540.5 308.5,558 237.5,558 229,539" fill="#fff" shape-rendering="geometricPrecision"/><path d="M229.2 539L237.5 558.5H308.5L316.5 540.3" fill="none" stroke="#6e6e6e" stroke-width="1" shape-rendering="geometricPrecision"/></svg><div class="t" style="left:242px;top:541px;font-size:11.5px;color:#000;font-weight:400;line-height:18px;">Preferences</div><div class="t" style="left:321px;top:541px;font-size:11.5px;color:#000;font-weight:400;line-height:18px;">Extended</div><div class="t" style="left:385px;top:541px;font-size:11.5px;color:#000;font-weight:400;line-height:18px;">Standard</div><div class="a" style="left:32px;top:559px;width:785px;height:1px;background:#d7d7d7;"></div><div class="a" style="left:596px;top:561px;width:1px;height:20px;background:#d0d0d0;"></div><div class="a" style="left:729px;top:561px;width:1px;height:20px;background:#d0d0d0;"></div><div class="a" style="left:814px;top:561px;width:1px;height:20px;background:#d0d0d0;"></div><div class="t" style="left:34px;top:563px;font-size:12px;color:#000;font-weight:400;line-height:18px;">Drive Maps</div>
</body></html>
